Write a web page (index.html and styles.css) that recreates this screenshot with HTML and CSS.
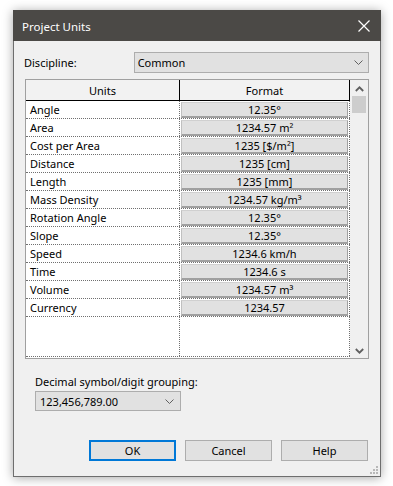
FILE: index.html
```html
<!DOCTYPE html>
<html>
<head>
<meta charset="utf-8">
<link rel="stylesheet" href="styles.css">
</head>
<body>
<div class="dialog">
  <div class="titlebar">
    <span class="title">Project Units</span>
    <svg class="close" width="12" height="12" viewBox="0 0 12 12"><path d="M0.5 0.5 L11.5 11.5 M11.5 0.5 L0.5 11.5" stroke="#ffffff" stroke-width="1.2" fill="none"/></svg>
  </div>
  <div class="body">
    <div class="discipline-row">
      <span class="label">Discipline:</span>
      <div class="combo combo-wide">
        <span>Common</span>
        <svg class="chev" width="9" height="5" viewBox="0 0 9 5"><path d="M0.5 0.5 L4.5 4.5 L8.5 0.5" stroke="#606060" stroke-width="1" fill="none"/></svg>
      </div>
    </div>
    <div class="grid">
      <div class="grid-main">
        <div class="header">
          <div class="hcell c1">Units</div>
          <div class="hcell c2">Format</div>
        </div>
        <div class="row"><div class="cell c1">Angle</div><div class="cell c2"><div class="fmt">12.35°</div></div></div>
        <div class="row"><div class="cell c1">Area</div><div class="cell c2"><div class="fmt">1234.57 m²</div></div></div>
        <div class="row"><div class="cell c1">Cost per Area</div><div class="cell c2"><div class="fmt">1235 [$/m²]</div></div></div>
        <div class="row"><div class="cell c1">Distance</div><div class="cell c2"><div class="fmt">1235 [cm]</div></div></div>
        <div class="row"><div class="cell c1">Length</div><div class="cell c2"><div class="fmt">1235 [mm]</div></div></div>
        <div class="row"><div class="cell c1">Mass Density</div><div class="cell c2"><div class="fmt">1234.57 kg/m³</div></div></div>
        <div class="row"><div class="cell c1">Rotation Angle</div><div class="cell c2"><div class="fmt">12.35°</div></div></div>
        <div class="row"><div class="cell c1">Slope</div><div class="cell c2"><div class="fmt">12.35°</div></div></div>
        <div class="row"><div class="cell c1">Speed</div><div class="cell c2"><div class="fmt">1234.6 km/h</div></div></div>
        <div class="row"><div class="cell c1">Time</div><div class="cell c2"><div class="fmt">1234.6 s</div></div></div>
        <div class="row"><div class="cell c1">Volume</div><div class="cell c2"><div class="fmt">1234.57 m³</div></div></div>
        <div class="row"><div class="cell c1">Currency</div><div class="cell c2"><div class="fmt">1234.57</div></div></div>
        <div class="filler"><div class="cell c1"></div><div class="cell c2"></div></div>
      </div>
      <div class="scrollbar">
        <svg class="arrow" width="9" height="6" viewBox="0 0 9 6"><path d="M0.8 5 L4.5 1.3 L8.2 5" stroke="#606060" stroke-width="1.8" fill="none"/></svg>
        <div class="thumb"></div>
        <div class="track"></div>
        <svg class="arrow" width="9" height="6" viewBox="0 0 9 6"><path d="M0.8 1 L4.5 4.7 L8.2 1" stroke="#606060" stroke-width="1.8" fill="none"/></svg>
      </div>
    </div>
    <div class="decimal">
      <div class="label">Decimal symbol/digit grouping:</div>
      <div class="combo combo-small">
        <span>123,456,789.00</span>
        <svg class="chev" width="9" height="5" viewBox="0 0 9 5"><path d="M0.5 0.5 L4.5 4.5 L8.5 0.5" stroke="#606060" stroke-width="1" fill="none"/></svg>
      </div>
    </div>
    <div class="buttons">
      <div class="btn btn-default">OK</div>
      <div class="btn">Cancel</div>
      <div class="btn">Help</div>
    </div>
  </div>
  <svg class="grip" width="9" height="9" viewBox="0 0 9 9">
    <rect x="7" y="1" width="2" height="2" fill="#b8b8b8"/>
    <rect x="4" y="4" width="2" height="2" fill="#b8b8b8"/>
    <rect x="7" y="4" width="2" height="2" fill="#b8b8b8"/>
    <rect x="1" y="7" width="2" height="2" fill="#b8b8b8"/>
    <rect x="4" y="7" width="2" height="2" fill="#b8b8b8"/>
    <rect x="7" y="7" width="2" height="2" fill="#b8b8b8"/>
  </svg>
</div>
</body>
</html>
```

FILE: styles.css
```css
html, body {
  margin: 0;
  padding: 0;
  background: #ffffff;
}
body {
  font-family: "Noto Sans", "Open Sans", sans-serif;
  font-size: 11px;
  color: #000000;
  width: 393px;
  height: 486px;
  overflow: hidden;
}
.dialog {
  position: relative;
  margin: 10px 0 0 13px;
  width: 368px;
  height: 467px;
  display: flex;
  flex-direction: column;
  box-shadow: 0 1px 10px rgba(0, 0, 0, 0.35);
}
.titlebar {
  height: 31px;
  background: #4b4946;
  display: flex;
  align-items: center;
  justify-content: space-between;
  padding: 0 11px 0 9px;
  flex: none;
}
.title {
  color: #ffffff;
  font-size: 11.5px;
  padding-top: 1px;
}
.close {
  display: block;
  margin-top: 1px;
}
.body {
  flex: 1;
  background: #f0f0f0;
  border: 1px solid #6e6e6e;
  border-top: none;
  padding: 11px 11px 0 10px;
  display: flex;
  flex-direction: column;
}
.discipline-row {
  display: flex;
  align-items: center;
  height: 21px;
}
.discipline-row .label {
  width: 110px;
}
.combo {
  box-sizing: border-box;
  background: #e1e1e1;
  border: 1px solid #adadad;
  display: flex;
  align-items: center;
  justify-content: space-between;
  padding: 0 5px 0 3px;
}
.combo-wide {
  width: 236px;
  height: 21px;
}
.combo-small {
  width: 146px;
  height: 20px;
  padding-left: 4px;
  padding-right: 6px;
}
.chev {
  display: block;
}
.grid {
  margin: 6px 0 0 1px;
  width: 344px;
  height: 280px;
  box-sizing: border-box;
  border: 1px solid #a0a0a0;
  background: #ffffff;
  display: flex;
}
.grid-main {
  width: 324px;
  display: flex;
  flex-direction: column;
}
.header {
  display: flex;
  height: 21px;
  flex: none;
}
.hcell {
  box-sizing: border-box;
  background: #f2f2f2;
  border-right: 1px solid #000000;
  border-bottom: 1px solid #000000;
  display: flex;
  align-items: center;
  justify-content: center;
  padding-top: 1px;
}
.c1 {
  width: 154px;
  flex: none;
}
.c2 {
  width: 170px;
  flex: none;
}
.row {
  display: flex;
  height: 18px;
  flex: none;
  box-sizing: border-box;
  border-bottom: 1px dotted #707070;
}
.cell {
  box-sizing: border-box;
  border-right: 1px dotted #707070;
  display: flex;
  align-items: center;
}
.cell.c1 {
  padding-left: 4px;
}
.cell.c2 {
  padding: 1px 1px 0 1px;
  align-items: flex-start;
}
.fmt {
  box-sizing: border-box;
  width: 100%;
  height: 16px;
  background: #e1e1e1;
  border-top: 1px solid #d0d0d0;
  border-left: 1px solid #c0c0c0;
  border-right: 1px solid #a0a0a0;
  border-bottom: 2px solid #a0a0a0;
  display: flex;
  align-items: center;
  justify-content: center;
  line-height: 13px;
}
.filler {
  flex: 1;
  display: flex;
  box-sizing: border-box;
  border-bottom: 1px dotted #707070;
  margin-bottom: 1px;
}
.scrollbar {
  width: 18px;
  background: #f0f0f0;
  display: flex;
  flex-direction: column;
  align-items: center;
}
.scrollbar .arrow {
  display: block;
  flex: none;
}
.scrollbar .arrow:first-child {
  margin-top: 6px;
}
.scrollbar .arrow:last-child {
  margin-bottom: 4px;
}
.thumb {
  width: 14px;
  height: 17px;
  background: #cdcdcd;
  margin-top: 4px;
  flex: none;
}
.track {
  flex: 1;
}
.decimal {
  margin: 15px 0 0 11px;
}
.decimal .label {
  line-height: 15px;
  height: 15px;
}
.decimal .combo {
  margin-top: 2px;
}
.buttons {
  display: flex;
  justify-content: flex-end;
  gap: 9px;
  margin-top: 29px;
  padding-right: 1px;
}
.btn {
  box-sizing: border-box;
  width: 87px;
  height: 21px;
  background: #e1e1e1;
  border: 1px solid #adadad;
  display: flex;
  align-items: center;
  justify-content: center;
}
.btn-default {
  border: 2px solid #0078d7;
}
.grip {
  position: absolute;
  right: 3px;
  bottom: 3px;
  display: block;
}
```
